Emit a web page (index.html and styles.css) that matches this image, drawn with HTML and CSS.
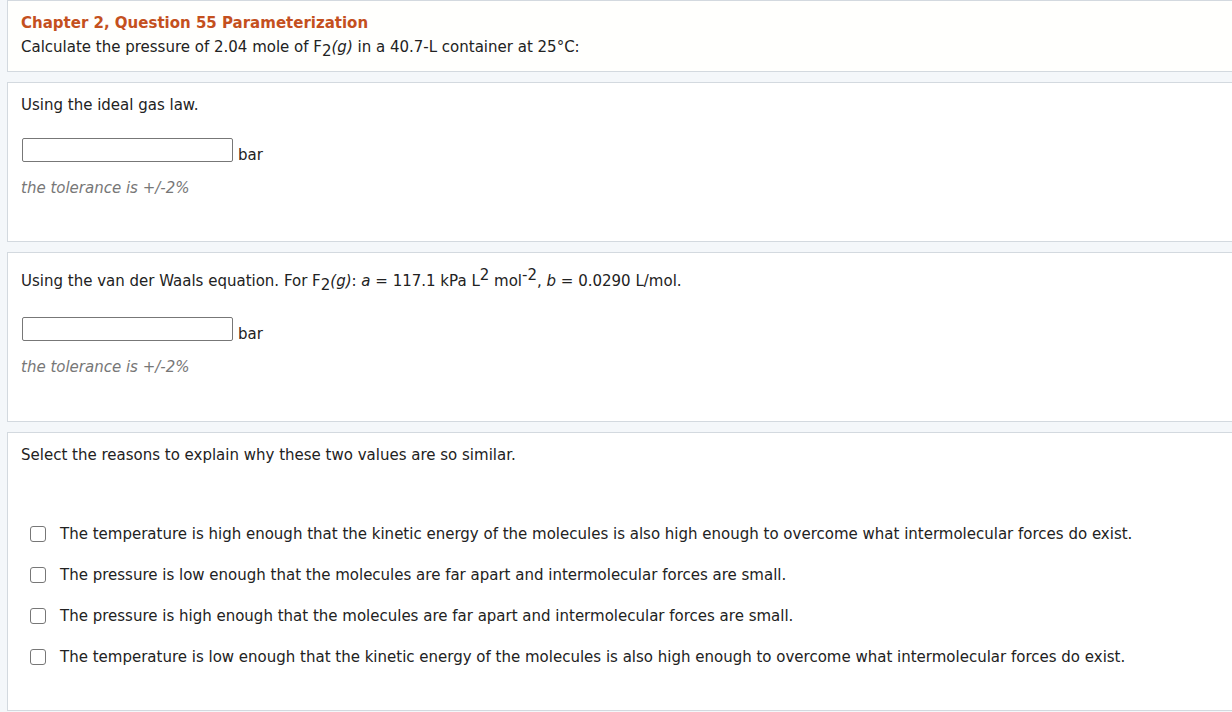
FILE: index.html
```html
<!DOCTYPE html>
<html>
<head>
<meta charset="utf-8">
<link rel="stylesheet" href="styles.css">
</head>
<body>
<div class="page">
  <section class="panel head">
    <h1 class="title">Chapter 2, Question 55 Parameterization</h1>
    <p class="lead">Calculate the pressure of 2.04 mole of F<sub>2</sub><i>(g)</i> in a 40.7-L container at 25°C:</p>
  </section>

  <section class="panel part p2">
    <p class="q">Using the ideal gas law.</p>
    <div class="answer"><span class="box"></span><span class="unit">bar</span></div>
    <p class="tol">the tolerance is +/-2%</p>
  </section>

  <section class="panel part p3">
    <p class="q">Using the van der Waals equation. For F<sub>2</sub><i>(g)</i>: <i>a</i> = 117.1 kPa L<sup>2</sup> mol<sup>-2</sup>, <i>b</i> = 0.0290 L/mol.</p>
    <div class="answer"><span class="box"></span><span class="unit">bar</span></div>
    <p class="tol">the tolerance is +/-2%</p>
  </section>

  <section class="panel part p4">
    <p class="q">Select the reasons to explain why these two values are so similar.</p>
    <ul class="choices">
      <li><span class="cb"></span>The temperature is high enough that the kinetic energy of the molecules is also high enough to overcome what intermolecular forces do exist.</li>
      <li><span class="cb"></span>The pressure is low enough that the molecules are far apart and intermolecular forces are small.</li>
      <li><span class="cb"></span>The pressure is high enough that the molecules are far apart and intermolecular forces are small.</li>
      <li><span class="cb"></span>The temperature is low enough that the kinetic energy of the molecules is also high enough to overcome what intermolecular forces do exist.</li>
    </ul>
  </section>
</div>
</body>
</html>
```

FILE: styles.css
```css
html, body {
  margin: 0;
  padding: 0;
  background: #f4f7fa;
  font-family: "DejaVu Sans", Verdana, sans-serif;
  font-size: 15px;
  color: #222;
  overflow: hidden;
}

.page {
  display: flex;
  flex-direction: column;
  gap: 10px;
  padding-left: 7px;
  margin-right: -20px;
}

.panel {
  background: #fff;
  border: 1px solid #d3d9df;
  box-sizing: border-box;
}

.head {
  height: 72px;
  padding: 13px 13px 0 13px;
  background: #fffffd;
}

.title {
  margin: 0;
  font-size: 15px;
  font-weight: bold;
  color: #c4501e;
  line-height: 18px;
}

.lead {
  margin: 6px 0 0;
  line-height: 18px;
}

sub {
  font-size: 15px;
  vertical-align: -4px;
  line-height: 0;
}

sup {
  font-size: 15px;
  vertical-align: 6px;
  line-height: 0;
}

.part {
  padding: 13px 13px 0 13px;
}

.p2 { height: 160px; }
.p3 { height: 170px; padding-top: 19px; }
.p3 .answer { margin-top: 27px; }
.p4 { height: 279px; }

.q {
  margin: 0;
  line-height: 18px;
}

.answer {
  display: flex;
  align-items: flex-end;
  margin-top: 24px;
  margin-left: 1px;
}

.box {
  width: 209px;
  height: 22px;
  border: 1px solid #777;
  border-radius: 2px;
  background: #fff;
}

.unit {
  margin-left: 5px;
  line-height: 18px;
  margin-bottom: -2px;
}

.tol {
  margin: 17px 0 0;
  font-style: italic;
  color: #777;
  line-height: 18px;
}

.choices {
  list-style: none;
  margin: 61px 0 0 9px;
  padding: 0;
  display: flex;
  flex-direction: column;
  gap: 23px;
}

.choices li {
  display: flex;
  align-items: center;
  line-height: 18px;
}

.cb {
  width: 14px;
  height: 14px;
  border: 1px solid #777;
  border-radius: 3px;
  margin-right: 14px;
  flex: none;
}
```
